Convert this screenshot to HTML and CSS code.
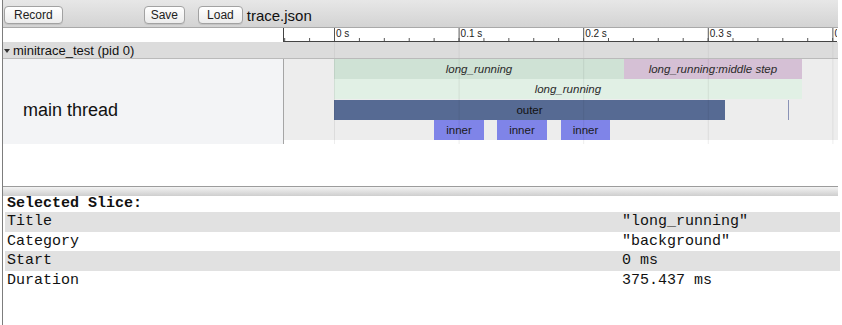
FILE: index.html
```html
<!DOCTYPE html>
<html lang="en">
<head>
  <meta charset="UTF-8" />
  <title>trace.json | Trace Viewer</title>
  <link rel="stylesheet" href="styles.css">
</head>
<body>

  <div class="app">
    <div class="toolbar">
      <button class="tool-btn tool-btn--record">Record</button>
      <button class="tool-btn tool-btn--save">Save</button>
      <button class="tool-btn tool-btn--load">Load</button>
      <span class="toolbar__file">trace.json</span>
    </div>

    <div class="ruler-row">
      <div class="ruler-row__spacer"></div>
      <div class="ruler" id="ruler"></div>
    </div>

    <div class="process">
      <div class="process__name"><span class="process__toggle"></span>minitrace_test (pid 0)</div>
      <div class="process__grid"></div>
    </div>

    <div class="track">
      <div class="track__label">main thread</div>
      <div class="track__lanes" id="lanes"></div>
    </div>

    <div class="blank"></div>
    <div class="splitter"></div>

    <div class="details">
      <div class="details__title">Selected Slice:</div>
      <div class="details__table">
        <div class="details__row"><span>Title</span><span>"long_running"</span></div>
        <div class="details__row"><span>Category</span><span>"background"</span></div>
        <div class="details__row"><span>Start</span><span>0 ms</span></div>
        <div class="details__row"><span>Duration</span><span>375.437 ms</span></div>
      </div>
    </div>
  </div>

  <script>
    // time axis: 0 s sits 50px into the lanes, 100 ms = 124.6px
    const ORIGIN = 50;
    const PX_PER_MS = 1.246;
    const ROW_TOP = [0, 20, 41, 61];

    const slices = [
      { title: "long_running", row: 0, start: 0, dur: 232.8, cls: "slice--green slice--italic" },
      { title: "long_running:middle step", row: 0, start: 232.8, dur: 142.6, cls: "slice--purple slice--italic" },
      { title: "long_running", row: 1, start: 0, dur: 375.437, cls: "slice--pale slice--italic" },
      { title: "outer", row: 2, start: 0, dur: 313.8, cls: "slice--outer" },
      { title: "", row: 2, start: 364, dur: 0, cls: "slice--instant" },
      { title: "inner", row: 3, start: 80.3, dur: 40.1, cls: "slice--inner" },
      { title: "inner", row: 3, start: 130.8, dur: 40.1, cls: "slice--inner" },
      { title: "inner", row: 3, start: 181.8, dur: 40.1, cls: "slice--inner" }
    ];

    const lanes = document.getElementById("lanes");
    slices.forEach(s => {
      const el = document.createElement("div");
      el.className = "slice " + s.cls;
      el.textContent = s.title;
      el.style.left = (ORIGIN + s.start * PX_PER_MS) + "px";
      el.style.width = Math.max(1, s.dur * PX_PER_MS) + "px";
      el.style.top = ROW_TOP[s.row] + "px";
      lanes.appendChild(el);
    });

    const ruler = document.getElementById("ruler");
    for (let i = 0; i < 5; i++) {
      const label = document.createElement("span");
      label.className = "ruler__label";
      label.textContent = (i / 10) + " s";
      label.style.left = (ORIGIN + i * 100 * PX_PER_MS + 2) + "px";
      ruler.appendChild(label);
    }
  </script>

</body>
</html>
```

FILE: styles.css
```css
* {
  box-sizing: border-box;
}

body {
  margin: 0;
  font-family: "Liberation Sans", Arial, sans-serif;
  color: #222;
  background-color: #fff;
}

.app {
  margin-left: 2px;
  width: 836px;
  min-height: 325px;
  border-left: 1px solid #7d7d7d;
}

/* toolbar */
.toolbar {
  display: flex;
  align-items: center;
  height: 28px;
  padding: 3px 0 0 1px;
  border-bottom: 1px solid #a9a9a9;
  background: linear-gradient(#e7e7e7, #d3d3d3);
}

.tool-btn {
  height: 18px;
  padding: 0 6px;
  font-family: "Liberation Sans", Arial, sans-serif;
  font-size: 12px;
  color: #222;
  background: linear-gradient(#ffffff, #ececec);
  border: 1px solid #a2a2a2;
  border-radius: 4px;
  box-shadow: 0 1px 0 rgba(0, 0, 0, 0.08);
}

.tool-btn--record {
  padding: 0 9px;
}

.tool-btn--save {
  margin-left: 81px;
}

.tool-btn--load {
  margin-left: 13px;
  padding: 0 8px;
}

.toolbar__file {
  margin-left: 4px;
  font-size: 15px;
  color: #111;
}

/* ruler */
.ruler-row {
  display: flex;
  height: 14px;
}

.ruler-row__spacer {
  width: 280px;
}

.ruler {
  flex: 1;
  position: relative;
  overflow: hidden;
  margin-right: 1px;
  border-left: 1px solid #444;
  border-bottom: 1px solid #444;
  background:
    linear-gradient(to right, #555 1px, transparent 1px) 50px 0 / 124.6px 100% repeat-x,
    linear-gradient(to right, #555 1px, transparent 1px) 50px 100% / 24.92px 3px repeat-x,
    #fff;
}

.ruler__label {
  position: absolute;
  top: 0;
  font-size: 10px;
  line-height: 12px;
  color: #222;
  white-space: nowrap;
}

/* process header */
.process {
  display: flex;
  height: 17px;
  border-bottom: 1px solid #bababa;
  background-color: #dcdcdc;
}

.process__name {
  width: 281px;
  display: flex;
  align-items: center;
  font-size: 13px;
  color: #111;
}

.process__toggle {
  width: 0;
  height: 0;
  margin: 1px 3px 0 1px;
  border-left: 3px solid transparent;
  border-right: 3px solid transparent;
  border-top: 4px solid #333;
}

.process__grid {
  flex: 1;
  background: linear-gradient(to right, rgba(0, 0, 0, 0.05) 1px, transparent 1px) 50px 0 / 124.6px 100% repeat-x;
}

/* thread track */
.track {
  display: flex;
  height: 85px;
}

.track__label {
  width: 281px;
  padding: 41px 0 0 20px;
  font-size: 18px;
  line-height: 20px;
  color: #111;
  background-color: #f3f4f6;
  border-right: 1px solid #a5a5a5;
}

.track__lanes {
  flex: 1;
  position: relative;
  overflow: hidden;
  background: linear-gradient(#ededed, #ededed) 0 0 / 100% 81px no-repeat, #fff;
}

.track__lanes::after {
  content: "";
  position: absolute;
  inset: 0;
  pointer-events: none;
  background: linear-gradient(to right, rgba(0, 0, 0, 0.07) 1px, transparent 1px) 50px 0 / 124.6px 100% repeat-x;
}

.slice {
  position: absolute;
  height: 20px;
  font-size: 11.5px;
  line-height: 20px;
  text-align: center;
  white-space: nowrap;
  overflow: hidden;
  color: #2a2a2a;
}

.slice--italic {
  font-style: italic;
}

.slice--green {
  background-color: #cfe2d5;
}

.slice--purple {
  background-color: #d5c0d5;
}

.slice--pale {
  background-color: #e1f0e5;
}

.slice--outer {
  background-color: #566a93;
  color: #111;
}

.slice--instant {
  background-color: #8a92b6;
}

.slice--inner {
  background-color: #7f84e8;
  color: #1a1a1a;
}

.blank {
  height: 42px;
}

.splitter {
  height: 10px;
  border-top: 1px solid #9c9c9c;
  background: linear-gradient(#f3f3f3, #cecece);
}

/* selected slice */
.details {
  padding-left: 2px;
  margin-right: -2px;
  font-family: "Liberation Mono", "Courier New", monospace;
  font-size: 15px;
  color: #111;
}

.details__title {
  padding-left: 2px;
  font-weight: bold;
  line-height: 16px;
}

.details__row {
  display: grid;
  grid-template-columns: 615px 1fr;
  height: 19.5px;
  line-height: 19.5px;
}

.details__row span {
  padding-left: 2px;
  white-space: pre;
}

.details__row:nth-child(odd) {
  background-color: #e1e1e1;
}
```
